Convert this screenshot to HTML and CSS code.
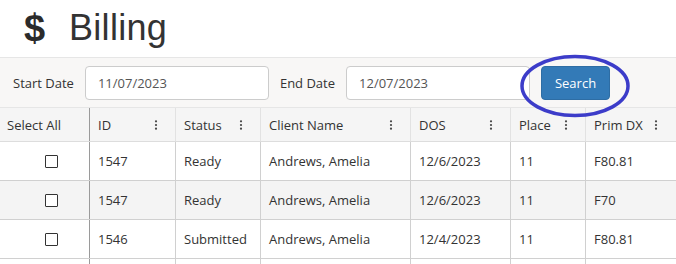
FILE: index.html
```html
<!DOCTYPE html>
<html>
<head>
<meta charset="utf-8">
<link rel="stylesheet" href="styles.css">
</head>
<body>
<div class="page">
  <h1 class="title"><span class="dollar">$</span><span class="title-text">Billing</span></h1>
  <div class="filters">
    <label class="flabel">Start Date</label>
    <input class="finput" type="text" value="11/07/2023">
    <label class="flabel">End Date</label>
    <input class="finput" type="text" value="12/07/2023">
    <button class="btn">Search</button>
    <svg class="circle" width="120" height="70" viewBox="0 0 120 70"><ellipse cx="57" cy="33" rx="53" ry="29.5" fill="none" stroke="#3c3cc9" stroke-width="3.5"/></svg>
  </div>
  <div class="grid">
    <div class="row head">
      <div class="c c0">Select All</div>
      <div class="c c1"><span>ID</span><svg class="kebab" width="4" height="10" viewBox="0 0 4 10"><circle cx="2" cy="1.3" r="1.1"/><circle cx="2" cy="5" r="1.1"/><circle cx="2" cy="8.7" r="1.1"/></svg></div>
      <div class="c c2"><span>Status</span><svg class="kebab" width="4" height="10" viewBox="0 0 4 10"><circle cx="2" cy="1.3" r="1.1"/><circle cx="2" cy="5" r="1.1"/><circle cx="2" cy="8.7" r="1.1"/></svg></div>
      <div class="c c3"><span>Client Name</span><svg class="kebab" width="4" height="10" viewBox="0 0 4 10"><circle cx="2" cy="1.3" r="1.1"/><circle cx="2" cy="5" r="1.1"/><circle cx="2" cy="8.7" r="1.1"/></svg></div>
      <div class="c c4"><span>DOS</span><svg class="kebab" width="4" height="10" viewBox="0 0 4 10"><circle cx="2" cy="1.3" r="1.1"/><circle cx="2" cy="5" r="1.1"/><circle cx="2" cy="8.7" r="1.1"/></svg></div>
      <div class="c c5"><span>Place</span><svg class="kebab" width="4" height="10" viewBox="0 0 4 10"><circle cx="2" cy="1.3" r="1.1"/><circle cx="2" cy="5" r="1.1"/><circle cx="2" cy="8.7" r="1.1"/></svg></div>
      <div class="c c6 last"><span class="primdx">Prim DX</span><svg class="kebab" width="4" height="10" viewBox="0 0 4 10"><circle cx="2" cy="1.3" r="1.1"/><circle cx="2" cy="5" r="1.1"/><circle cx="2" cy="8.7" r="1.1"/></svg></div>
    </div>
    <div class="row">
      <div class="c c0 chk"><input class="box" type="checkbox"></div>
      <div class="c c1">1547</div>
      <div class="c c2">Ready</div>
      <div class="c c3">Andrews, Amelia</div>
      <div class="c c4">12/6/2023</div>
      <div class="c c5">11</div>
      <div class="c c6">F80.81</div>
    </div>
    <div class="row alt">
      <div class="c c0 chk"><input class="box" type="checkbox"></div>
      <div class="c c1">1547</div>
      <div class="c c2">Ready</div>
      <div class="c c3">Andrews, Amelia</div>
      <div class="c c4">12/6/2023</div>
      <div class="c c5">11</div>
      <div class="c c6">F70</div>
    </div>
    <div class="row">
      <div class="c c0 chk"><input class="box" type="checkbox"></div>
      <div class="c c1">1546</div>
      <div class="c c2">Submitted</div>
      <div class="c c3">Andrews, Amelia</div>
      <div class="c c4">12/4/2023</div>
      <div class="c c5">11</div>
      <div class="c c6">F80.81</div>
    </div>
    <div class="row">
      <div class="c c0 chk"></div>
      <div class="c c1"></div>
      <div class="c c2"></div>
      <div class="c c3"></div>
      <div class="c c4"></div>
      <div class="c c5"></div>
      <div class="c c6"></div>
    </div>
  </div>
</div>
</body>
</html>
```
FILE: styles.css
```css
html, body {
  margin: 0;
  padding: 0;
  background: #ffffff;
  overflow: hidden;
}
.page {
  width: 676px;
  height: 264px;
  overflow: hidden;
  font-family: "Open Sans", "Liberation Sans", sans-serif;
  font-size: 13px;
  color: #333333;
}
.title {
  margin: 0;
  height: 57px;
  display: flex;
  align-items: center;
  padding-left: 24px;
  font-weight: normal;
  box-sizing: border-box;
  padding-bottom: 1px;
}
.dollar {
  font-family: "Liberation Sans", sans-serif;
  font-weight: bold;
  font-size: 38px;
  width: 22px;
  margin-right: 23px;
  color: #2b2b2b;
}
.title-text {
  font-family: "Liberation Sans", sans-serif;
  font-size: 36px;
  color: #333333;
  letter-spacing: 0.3px;
}
.filters {
  position: relative;
  display: flex;
  align-items: center;
  gap: 11px;
  padding: 9px 13px 8px 13px;
  background: #f8f7f6;
  border-top: 1px solid #e6e6e6;
  border-bottom: 1px solid #e6e6e6;
  height: 51px;
  box-sizing: border-box;
}
.flabel {
  font-size: 13px;
  color: #333333;
  white-space: nowrap;
}
.finput {
  width: 184px;
  height: 34px;
  box-sizing: border-box;
  border: 1px solid #cccccc;
  border-radius: 4px;
  padding: 0 12px;
  font-family: "Open Sans", "Liberation Sans", sans-serif;
  font-size: 13px;
  color: #555555;
  background: #ffffff;
  outline: none;
}
.btn {
  width: 69px;
  height: 34px;
  box-sizing: border-box;
  background: #337ab7;
  border: 1px solid #2e6da4;
  border-radius: 4px;
  color: #ffffff;
  font-family: "Open Sans", "Liberation Sans", sans-serif;
  font-size: 13px;
  padding: 0;
}
.circle {
  position: absolute;
  left: 518px;
  top: -5px;
}
.grid {
  width: 676px;
}
.row {
  display: flex;
  height: 39px;
  border-bottom: 1px solid #d0d0d0;
  box-sizing: border-box;
  background: #ffffff;
}
.row.head {
  height: 34px;
  background: #f5f5f5;
  border-bottom: 1px solid #dddddd;
}
.row.alt {
  background: #f4f4f4;
}
.c {
  box-sizing: border-box;
  border-right: 1px solid #d0d0d0;
  display: flex;
  align-items: center;
  justify-content: space-between;
  padding-left: 8px;
  padding-right: 17px;
  white-space: nowrap;
  flex: none;
}
.head .c {
  border-right-color: #e2e2e2;
}
.c0 { width: 90px; padding-left: 7px; border-right: 1px solid #9a9a9a !important; }
.c1 { width: 86px; }
.c2 { width: 85px; }
.c3 { width: 150px; }
.c4 { width: 100px; }
.c5 { width: 75px; }
.c6 { flex: 1 1 auto; width: auto; border-right: none; }
.c6.last {
  justify-content: flex-start;
  padding-right: 0;
}
.kebab {
  fill: #444444;
  flex: none;
}
.primdx {
  width: 60px;
  flex: none;
}
.chk {
  padding-left: 45px;
  justify-content: flex-start;
}
.box {
  appearance: none;
  -webkit-appearance: none;
  margin: 0;
  width: 13px;
  height: 13px;
  border: 1px solid #333333;
  border-radius: 1px;
  background: #ffffff;
}
```
